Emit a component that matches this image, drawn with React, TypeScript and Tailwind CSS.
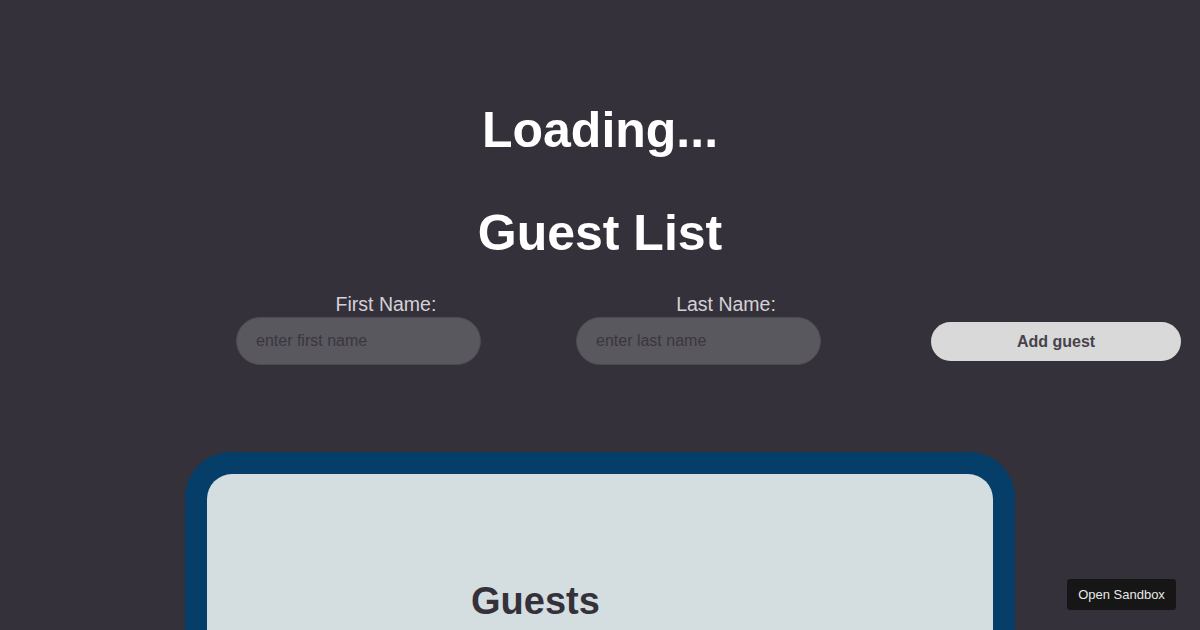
import React from "react";

export default function App() {
  return (
    <div
      className="relative h-[630px] w-[1200px] overflow-hidden bg-[#35313a]"
      style={{ fontFamily: '"Liberation Sans", Arial, sans-serif' }}
    >
      <div className="flex flex-col items-center pt-[101px]">
        <h1 className="text-[50px] font-bold leading-[58px] text-white">Loading...</h1>
        <h1 className="mt-[45px] text-[50px] font-bold leading-[58px] text-white">Guest List</h1>
      </div>

      <form className="mt-[31px] flex items-end pl-[236px]">
        <div className="flex w-[300px] flex-col">
          <label className="text-center text-[19.5px] leading-[22px] text-[#d3d1d8]">First Name:</label>
          <input
            placeholder="enter first name"
            className="mt-[2px] h-[48px] w-[245px] rounded-full border border-[#4d4a53] bg-[#5a585f] px-[19px] text-[16px] text-[#3a3640] outline-none placeholder:text-[#3a3640]"
          />
        </div>
        <div className="ml-[40px] flex w-[300px] flex-col">
          <label className="text-center text-[19.5px] leading-[22px] text-[#d3d1d8]">Last Name:</label>
          <input
            placeholder="enter last name"
            className="mt-[2px] h-[48px] w-[245px] rounded-full border border-[#4d4a53] bg-[#5a585f] px-[19px] text-[16px] text-[#3a3640] outline-none placeholder:text-[#3a3640]"
          />
        </div>
        <button
          type="button"
          className="mb-[4px] ml-[55px] h-[39px] w-[250px] rounded-full bg-[#d9d9d9] text-[16px] font-bold text-[#47434c]"
        >
          Add guest
        </button>
      </form>

      <div className="mx-auto mt-[87px] w-[830px] rounded-[46px] bg-[#043e69] px-[22px] pt-[22px]">
        <div className="h-[400px] rounded-[25px] bg-[#d4dee1] pl-[264px] pt-[105px]">
          <h2 className="text-[38px] font-bold leading-[44px] text-[#35313a]">Guests</h2>
        </div>
      </div>

      <div className="absolute bottom-[20px] right-[24px] flex h-[31px] w-[109px] items-center justify-center rounded-[3px] bg-[#161616] text-[13px] text-[#e8e8e8]">
        Open Sandbox
      </div>
    </div>
  );
}
